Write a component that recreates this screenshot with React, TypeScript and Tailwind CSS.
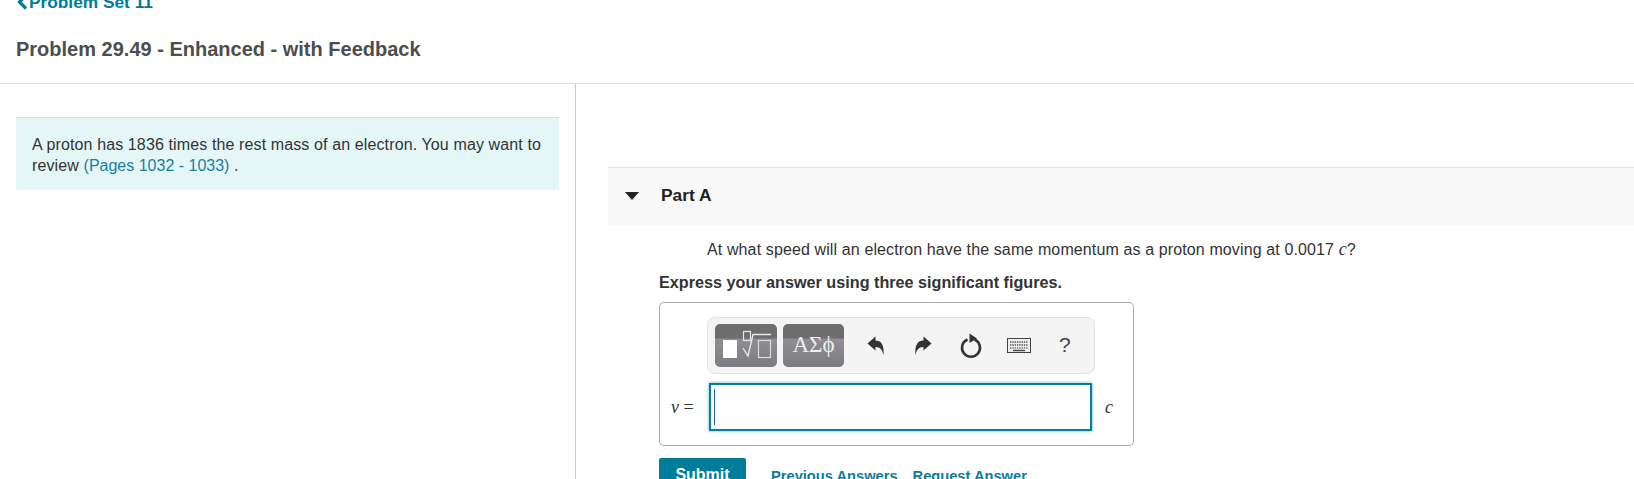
import React from "react";

function MathIcon() {
  return (
    <svg width="56" height="40" viewBox="0 0 56 40" fill="none">
      <rect x="5" y="16" width="14" height="18" fill="#fff" />
      <rect x="25.5" y="7.5" width="7" height="9" stroke="#e4e4e4" strokeWidth="1.2" />
      <path d="M25 24 L30 32 L35 10.5 H53" stroke="#e8e8e8" strokeWidth="1.4" />
      <rect x="40.5" y="16.5" width="12" height="17" stroke="#dcdcdc" strokeWidth="1.2" />
    </svg>
  );
}

function Undo({ flip }: { flip?: boolean }) {
  return (
    <svg width="20" height="22" viewBox="0 0 20 22" className={flip ? "-scale-x-100" : ""}>
      <path d="M1.5 8.5 L9.5 1.5 V5.5 C15 5.5 18.5 9.5 17.5 20.5 C16.5 15 14.5 12 9.5 12 V15.5 Z" fill="#333" />
    </svg>
  );
}

function Reset() {
  return (
    <svg width="24" height="27" viewBox="0 0 24 27" fill="none">
      <path d="M8.5 7.5 A9 9 0 1 0 15.5 7.5" stroke="#333" strokeWidth="2.6" />
      <path d="M10.5 1.5 L18 6.5 L10.5 11 Z" fill="#333" />
    </svg>
  );
}

function Keyboard() {
  return (
    <svg width="24" height="15" viewBox="0 0 24 15" fill="none">
      <rect x="0.5" y="0.5" width="23" height="14" fill="#eee" stroke="#444" />
      <path d="M3 4 H21 M3 7 H21" stroke="#555" strokeWidth="1.6" strokeDasharray="1.4 0.9" />
      <path d="M3 10 H21" stroke="#777" strokeWidth="1.4" strokeDasharray="1.4 0.9" />
      <path d="M6 12.5 H18" stroke="#444" strokeWidth="1.4" />
    </svg>
  );
}

export default function App() {
  return (
    <div className="h-[479px] overflow-hidden bg-white font-['Liberation_Sans',Arial,sans-serif] text-[#333]">
      <header className="h-[84px] overflow-hidden border-b border-[#d9dfe3] pl-4">
        <a className="-mt-[7px] flex items-center text-[17.3px] leading-[18px] font-bold text-[#007c9b]">
          <svg width="13" height="16" viewBox="0 0 13 16">
            <path d="M10 1.5 L3.5 8 L10 14.5" fill="none" stroke="#007c9b" strokeWidth="3.2" />
          </svg>
          Problem Set 11
        </a>
        <h1 className="mt-[26px] text-[20px] leading-[24px] font-bold text-[#4d4d4d]">
          Problem 29.49 - Enhanced - with Feedback
        </h1>
      </header>

      <div className="flex h-[395px]">
        <aside className="w-[576px] shrink-0 border-r border-[#b9cfdc] pt-[33px] pl-4 pr-[16px]">
          <div className="h-[73px] border-t border-[#d5e0e4] bg-[#e5f6f7] px-4 pt-[16px] text-[16px] leading-[21px] tracking-[0.12px] text-[#333]">
            A proton has 1836 times the rest mass of an electron. You may want to review{" "}
            <a className="tracking-normal text-[#1a7f9c]">(Pages 1032 - 1033)</a> .
          </div>
        </aside>

        <main className="min-w-0 flex-1 pt-[83px] pl-[32px]">
          <div className="flex h-[58px] items-center border-t border-[#e4e4e4] bg-[#f8f8f8] pb-[2px] pl-[17px]">
            <svg width="14" height="8" viewBox="0 0 14 8">
              <path d="M0 0 H14 L7 8 Z" fill="#222" />
            </svg>
            <h2 className="ml-[22px] text-[17.4px] font-bold text-[#222]">Part A</h2>
          </div>

          <div className="pl-[51px]">
            <p className="mt-[14px] pl-[48px] text-[16px] leading-[20px] tracking-[0.12px] text-[#333]">
              At what speed will an electron have the same momentum as a proton moving at 0.0017{" "}
              <i className="font-['Liberation_Serif',serif] text-[18px]">c</i>?
            </p>
            <p className="mt-[12px] text-[16.2px] leading-[20px] font-bold text-[#333]">
              Express your answer using three significant figures.
            </p>

            <div className="mt-[10px] h-[144px] w-[475px] rounded-[5px] border border-[#aaa] pt-[14px] pl-[47px]">
              <div className="flex h-[57px] w-[388px] items-center rounded-[8px] border border-[#e2e2e2] bg-[#f4f4f4] pl-[7px]">
                <div className="h-[43px] w-[62px] overflow-hidden rounded-[5px] bg-[linear-gradient(#6d6d6d_0,#6d6d6d_14px,#908e94_15px,#7c7c80_100%)] pl-[3px]">
                  <MathIcon />
                </div>
                <div className="ml-[6px] flex h-[43px] w-[61px] items-center justify-center rounded-[5px] bg-[linear-gradient(#6d6d6d_0,#6d6d6d_14px,#908e94_15px,#7c7c80_100%)] pb-[1px] font-['Liberation_Serif',serif] text-[23px] text-[#eee]">
                  ΑΣϕ
                </div>
                <div className="ml-[22px] flex w-[20px] justify-center"><Undo /></div>
                <div className="ml-[27px] flex w-[20px] justify-center"><Undo flip /></div>
                <div className="ml-[26px] flex w-[24px] justify-center"><Reset /></div>
                <div className="ml-[24px] flex w-[24px] justify-center"><Keyboard /></div>
                <div className="ml-[28px] pb-[2px] text-[21px] text-[#444]">?</div>
              </div>

              <div className="mt-[9px] flex items-center">
                <span className="-ml-[36px] w-[38px] font-['Liberation_Serif',serif] text-[18px] text-[#333]">
                  <i>v</i> =
                </span>
                <div className="flex h-[48px] w-[383px] items-center border-2 border-[#00809e] bg-white pl-[3px] shadow-[0_0_3px_#5fb0c6]">
                  <div className="h-[36px] w-px bg-[#2f5fc4]" />
                </div>
                <i className="ml-[13px] font-['Liberation_Serif',serif] text-[18px] text-[#333]">c</i>
              </div>
            </div>

            <div className="mt-[12px] flex items-start">
              <button className="h-[40px] w-[87px] rounded-[2px] bg-[#007c9b] pb-[6px] text-[16px] leading-[20px] font-bold text-white">
                Submit
              </button>
              <a className="ml-[25px] pt-[7px] text-[14.67px] font-bold text-[#0b7c9c]">Previous Answers</a>
              <a className="ml-[15px] pt-[7px] text-[14.67px] font-bold text-[#0b7c9c]">Request Answer</a>
            </div>
          </div>
        </main>
      </div>
    </div>
  );
}
